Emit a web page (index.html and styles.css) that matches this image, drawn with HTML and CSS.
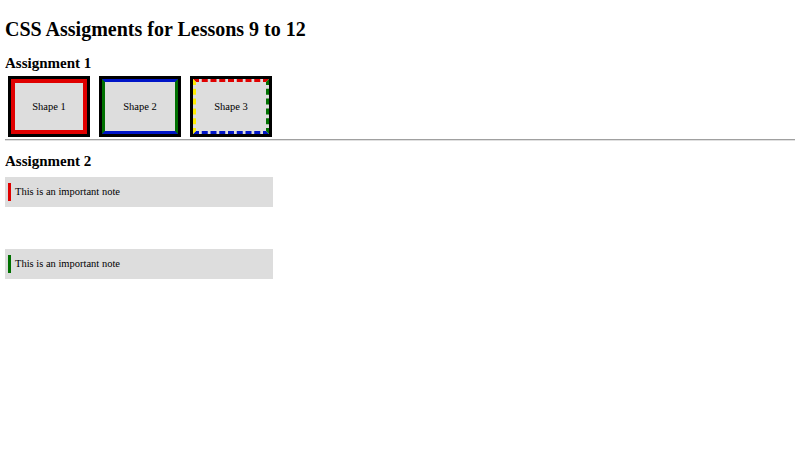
FILE: index.html
```html
<!DOCTYPE html>
<html>
<head>
<meta charset="utf-8">
<title>CSS Assigments</title>
<link rel="stylesheet" href="styles.css">
</head>
<body>
<h1>CSS Assigments for Lessons 9 to 12</h1>
<h2 class="section-title">Assignment 1</h2>
<div class="shapes">
  <div class="shape shape-1">Shape 1</div>
  <div class="shape shape-2">Shape 2</div>
  <div class="shape shape-3">Shape 3</div>
</div>
<hr class="divider">
<h2 class="section-title section-title-2">Assignment 2</h2>
<div class="note note-red"><span class="bar"></span>This is an important note</div>
<div class="note note-green"><span class="bar"></span>This is an important note</div>
</body>
</html>
```

FILE: styles.css
```css
body {
  margin: 5px;
  font-family: "Liberation Serif", "Times New Roman", serif;
  font-size: 10px;
  color: #000;
  background: #fff;
}
h1 {
  font-size: 20px;
  margin: 13.4px 0;
}
.section-title {
  font-size: 15px;
  margin: 12.45px 0 7px;
}
.section-title-2 {
  margin: 12px 0 7px;
}
.shapes {
  display: flex;
  gap: 15px;
  padding: 0 6px;
}
.shape {
  box-sizing: border-box;
  width: 76px;
  height: 55px;
  background: #dddddd;
  outline: 3px solid #000;
  display: flex;
  align-items: center;
  justify-content: center;
  font-size: 10.5px;
}
.shape-1 {
  border: 4px solid #e00000;
}
.shape-2 {
  border: 3px solid;
  border-color: #0015c8 #007000 #0015c8 #007000;
}
.shape-3 {
  border: 3px dashed;
  border-color: #e00000 #007000 #0015c8 #ffee00;
}
.divider {
  margin: 5px 0 0;
  border: 0;
  border-top: 1px solid #a0a0a0;
  border-bottom: 1px solid #e0e0e0;
}
.note {
  display: flex;
  align-items: center;
  gap: 4px;
  width: 265px;
  height: 30px;
  margin-left: -3px;
  padding-left: 6px;
  background: #dddddd;
  font-size: 10.5px;
}
.note + .note {
  margin-top: 42px;
}
.bar {
  width: 3px;
  height: 18px;
}
.note-red .bar { background: #e00000; }
.note-green .bar { background: #007000; }
```
